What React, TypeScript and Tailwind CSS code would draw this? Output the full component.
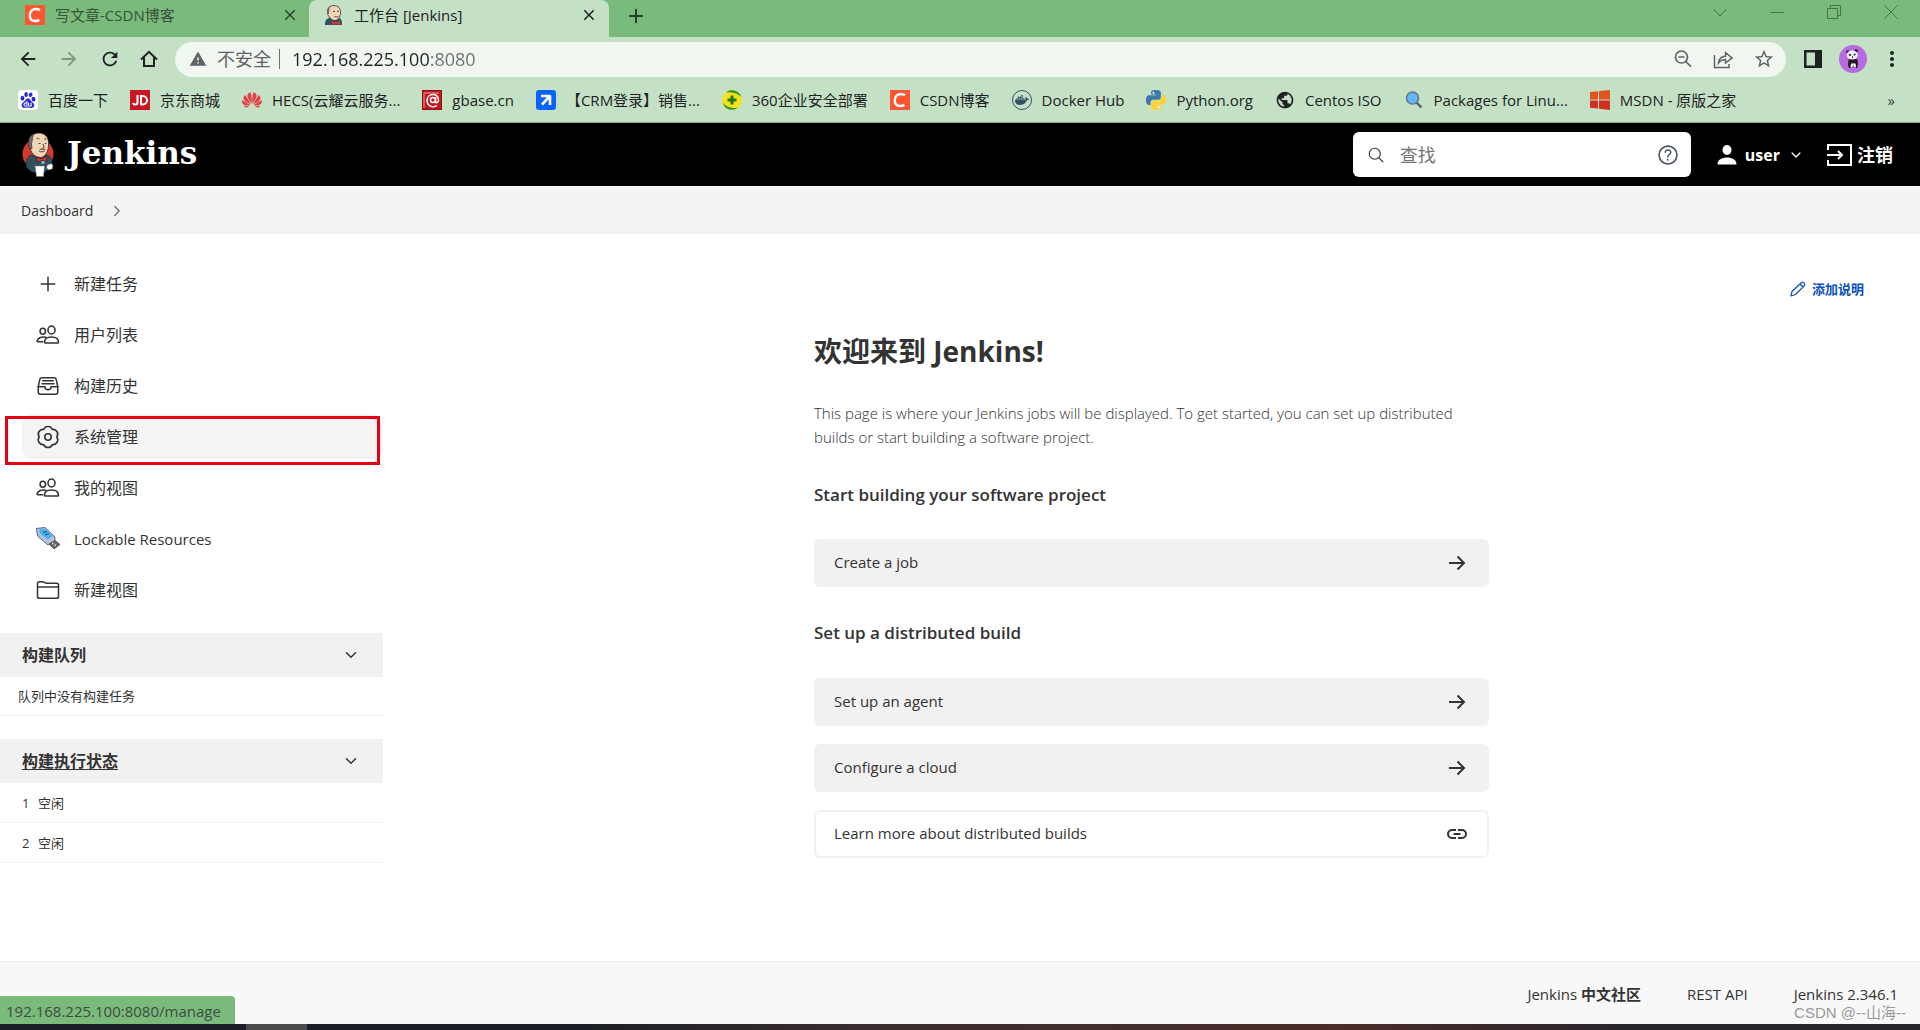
import type { ReactNode } from 'react'
import { SiBaidu, SiDocker, SiHuawei } from 'react-icons/si'
import {
  MdArrowBack,
  MdArrowForward,
  MdClose,
  MdMoreVert,
  MdPublic,
  MdRefresh,
  MdStarBorder,
  MdWarning,
} from 'react-icons/md'
import {
  IoAddOutline,
  IoChevronDown,
  IoChevronForward,
  IoFileTrayFullOutline,
  IoFolderOutline,
  IoHelpCircleOutline,
  IoSearchOutline,
} from 'react-icons/io5'

function CsdnIcon() {
  return (
    <svg className="h-5 w-5 shrink-0" viewBox="0 0 20 20">
      <rect width="20" height="20" fill="#fc5531" />
      <path d="M15 5.2C11.5 3 5.2 3.400 4.800 10.200c-.2 6.300 5.800 6.600 9.600 4.700" fill="none" stroke="#fff" strokeWidth="2.400" />
    </svg>
  )
}

function JenkinsHead() {
  return (
    <svg className="h-5 w-5 shrink-0" viewBox="0 0 20 20">
      <path d="M1 20c0-4 1-6 4-7l10 0c3 1 3 4 3 7z" fill="#335061" />
      <path d="M3.500 8C3 3 6 .6 10 .6s7 2.900 6.500 7.400c-.2 4-2.500 7.500-5.500 7.500S4 12 3.500 8z" fill="#f0d6b7" stroke="#3b2f2a" strokeWidth=".8" />
      <path d="M3.300 9C2.500 4 4.500 1.500 7 1c-2 2-1.500 4-2 8z" fill="#6d6b6d" />
      <path d="M9 6.500h2M13 6.300h2M10.500 11.500c1.500.8 3 .5 4-.2" stroke="#3b2f2a" strokeWidth=".9" fill="none" />
      <path d="M8 16l4 1.500L16 16v4l-4-1-4 1z" fill="#d33833" />
    </svg>
  )
}

function JenkinsLogo() {
  return (
    <svg className="h-[45px] w-8 shrink-0" viewBox="0 0 32 45">
      <circle cx="16" cy="22" r="15.500" fill="#d33833" />
      <path d="M5 36C3 31 5 25 9 23l7 3 9-3c5 2 6 8 4 13l-7 4H10z" fill="#335061" stroke="#1b2a33" strokeWidth=".8" />
      <path d="M7 13C6.500 5 11 1 17 1s10 4.500 9.600 11C26.500 20 23 25.500 18.500 25.500 13 25.500 8.500 21 7 13z" fill="#f0d6b7" stroke="#2b221e" strokeWidth=".8" />
      <path d="M6.800 14C5.500 7 8.500 3 12 1.800 9.500 6 11 9 9.500 11.500L10 17c-1.800 0-2.800-1-3.200-3z" fill="#6d6b6d" stroke="#2b221e" strokeWidth=".6" />
      <path d="M14.500 7c1-1 2.200-1 3 0M22 7.500c.8-.8 1.800-.8 2.500 0M16.500 11.500h2M22.800 11.500h1.600M21 12l1.200 3-1.700.6M17 19c2 1.400 4.400 1 6-.4" fill="none" stroke="#2b221e" strokeWidth=".8" />
      <path d="M17 17.300c2-1.200 5-1.200 7-.2-1.500 1.500-5 1.600-7 .2z" fill="#6d6b6d" />
      <path d="M15 25l4.500 2L24 24.500l1 5-5-1-5 1.500z" fill="#d33833" stroke="#3d0f0d" strokeWidth=".6" />
      <circle cx="21" cy="30.500" r="2.300" fill="#81b0c4" stroke="#1b2a33" strokeWidth=".7" />
      <path d="M13 34h9.500l-1 10.500h-7z" fill="#fff" stroke="#777" strokeWidth=".5" />
      <path d="M25 33l4-1.500 2 1.500-.5 4-4 1-2-2z" fill="#fff" stroke="#444" strokeWidth=".6" />
    </svg>
  )
}

function JdIcon() {
  return (
    <svg className="h-5 w-5 shrink-0" viewBox="0 0 20 20">
      <rect width="20" height="20" fill="#c81623" />
      <path d="M7.500 5v7.500c0 2.600-4 2.600-4.500.6M11 5v10M10.500 6h2c6 0 6 8.500 0 8.500h-2" fill="none" stroke="#fff" strokeWidth="2" />
    </svg>
  )
}

function GbaseIcon() {
  return (
    <svg className="h-5 w-5 shrink-0" viewBox="0 0 20 20">
      <rect x=".5" y=".5" width="19" height="19" fill="#c4161c" stroke="#8c1014" />
      <path d="M2 18V3h15" fill="none" stroke="#f0a0a0" strokeWidth="1" />
      <circle cx="11" cy="10" r="2.500" fill="none" stroke="#fff" strokeWidth="1.600" />
      <path d="M13.500 7v4.500c0 2 3 1.500 3-1.500 0-7.500-11-7-11.500 0-.3 6.500 6.500 8 10 5.500" fill="none" stroke="#fff" strokeWidth="1.500" />
    </svg>
  )
}

function CrmIcon() {
  return (
    <svg className="h-5 w-5 shrink-0" viewBox="0 0 20 20">
      <rect width="20" height="20" rx="3" fill="#0a63ff" />
      <path d="M5 6h9.500M14 5.500V15M13.500 6.500L6 14.500" fill="none" stroke="#fff" strokeWidth="2.600" />
    </svg>
  )
}

function Shield360Icon() {
  return (
    <svg className="h-5 w-5 shrink-0" viewBox="0 0 20 20">
      <circle cx="10" cy="10" r="9.800" fill="#f7e01d" />
      <path d="M4 2.200C9-1.500 17 0 19.500 7 15 2.500 9 2 4 2.200zM1 13c4 4.500 10 6 15 4.500-4 3.500-13 3.500-15-4.500z" fill="#2f9a1c" />
      <path d="M10 5.500v9M5.500 10h9" stroke="#1f7a12" strokeWidth="3" />
    </svg>
  )
}

function PythonIcon() {
  return (
    <svg className="h-5 w-5 shrink-0" viewBox="0 0 24 24">
      <path fill="#3c78aa" d="M14.250.18l.9.2.73.26.59.3.45.32.34.34.25.34.16.33.1.3.04.26.02.2-.01.13V8.500l-.05.63-.13.55-.21.46-.26.38-.3.31-.33.25-.35.19-.35.14-.33.1-.3.07-.26.04-.21.02H8.770l-.69.05-.59.14-.5.22-.41.27-.33.32-.27.35-.2.36-.15.37-.1.35-.07.32-.04.27-.02.21v3.060H3.170l-.21-.03-.28-.07-.32-.12-.35-.18-.36-.26-.36-.36-.35-.46-.32-.59-.28-.73-.21-.88-.14-1.050-.05-1.230.06-1.220.16-1.040.24-.87.32-.71.36-.57.4-.44.42-.33.42-.24.4-.16.36-.1.32-.05.24-.01h.16l.06.01h8.160v-.83H6.180l-.01-2.750-.02-.37.05-.34.11-.31.17-.28.25-.26.31-.23.38-.2.44-.18.51-.15.58-.12.64-.1.71-.06.77-.04.84-.02 1.270.05z" />
      <circle cx="8.800" cy="3.300" r="1.100" fill="#fff" />
      <path fill="#fdd23e" d="M21.040 6.110l.28.06.32.12.35.18.36.27.36.35.35.47.32.59.28.73.21.88.14 1.040.05 1.230-.06 1.230-.16 1.040-.24.86-.32.71-.36.57-.4.45-.42.33-.42.24-.4.16-.36.09-.32.05-.24.02-.16-.01h-8.220v.82h5.840l.01 2.760.02.36-.05.34-.11.31-.17.29-.25.25-.31.24-.38.2-.44.17-.51.15-.58.13-.64.09-.71.07-.77.04-.84.01-1.270-.04-1.070-.14-.9-.2-.73-.25-.59-.3-.45-.33-.34-.34-.25-.34-.16-.33-.1-.3-.04-.25-.02-.2.01-.13v-5.340l.05-.64.13-.54.21-.46.26-.38.3-.32.33-.24.35-.2.35-.14.33-.1.3-.06.26-.04.21-.02.13-.01h5.840l.69-.05.59-.14.5-.21.41-.28.33-.32.27-.35.2-.36.15-.36.1-.35.07-.32.04-.28.02-.21V6.070h2.090l.14.01z" />
      <circle cx="15.200" cy="20.900" r="1.100" fill="#fff" />
    </svg>
  )
}

function LensIcon() {
  return (
    <svg className="h-5 w-5 shrink-0" viewBox="0 0 20 20">
      <path d="M12.500 12.500l5 5" stroke="#50606c" strokeWidth="2.400" />
      <circle cx="8.500" cy="8" r="6" fill="#64b5f6" stroke="#5a7a90" strokeWidth="1.600" />
    </svg>
  )
}

function WindowsIcon() {
  return (
    <svg className="h-5 w-5 shrink-0" viewBox="0 0 20 20">
      <path d="M0 2l8-.8V9.500H0zM9 1.100L20 0v9.500H9z" fill="#e2541f" />
      <path d="M0 10.500h8v8L0 17.700zM9 10.500h11V20L9 18.700z" fill="#cf3022" />
    </svg>
  )
}

function PandaAvatar() {
  return (
    <svg className="h-7 w-7" viewBox="0 0 28 28">
      <circle cx="14" cy="14" r="14" fill="#b66be0" />
      <path d="M9.500 14.500c2-1.500 7-1.500 9 0l.5 5-1 3.500h-3l-1-3-1 3h-3l-1-3z" fill="#1d1a22" />
      <path d="M12 18.500h4.500l.5 4h-1.500l-1.300-2.500-1.200 2.500h-1.500z" fill="#fff" />
      <circle cx="9" cy="7" r="1.800" fill="#1d1a22" />
      <circle cx="17" cy="6" r="1.800" fill="#1d1a22" />
      <ellipse cx="13.300" cy="10" rx="5.600" ry="4.600" fill="#f4f0f6" />
      <path d="M10 9.500l2 1M16.500 9l-1.800 1.200M13 12h1" stroke="#1d1a22" strokeWidth="1.400" />
    </svg>
  )
}

function PeopleIcon() {
  return (
    <svg className="h-6 w-6" viewBox="0 0 24 24" fill="none" stroke="currentColor" strokeWidth="1.600" strokeLinejoin="round">
      <ellipse cx="15.500" cy="7" rx="3.500" ry="4" />
      <ellipse cx="6.800" cy="8.300" rx="2.700" ry="3" />
      <path d="M8.500 19.200c0-3.400 3-5.200 7-5.200s7 1.800 7 5.200c0 .5-.3.800-.8.800H9.300c-.5 0-.8-.3-.8-.8z" />
      <path d="M9.800 14.300c-3.800-1-8 .3-8.600 3.600-.1.500.2.800.7.800h4.800" strokeLinecap="round" />
    </svg>
  )
}

function GearIcon() {
  return (
    <svg className="h-6 w-6" viewBox="0 0 24 24" fill="none" stroke="currentColor" strokeWidth="1.600" strokeLinejoin="round">
      <path d="M7.600 4.400a4.800 4.800 0 0 1 8.800 0a4.800 4.800 0 0 1 4.400 7.600a4.800 4.800 0 0 1-4.400 7.600a4.800 4.800 0 0 1-8.800 0a4.800 4.800 0 0 1-4.400-7.600a4.800 4.800 0 0 1 4.400-7.600z" />
      <circle cx="12" cy="12" r="3.200" />
    </svg>
  )
}

function UsbIcon() {
  return (
    <svg className="h-6 w-6" viewBox="0 0 24 24">
      <path d="M0 1.500L9 .5l10 9.500-.5 5-6.500 3L2 9.500z" fill="#b9bfd6" stroke="#5d6390" strokeWidth="1" />
      <path d="M3.500 2.500L9 1.800l7.500 7.400-5 3.300L3.500 6z" fill="#45b4ee" />
      <path d="M7 5.500l4-1M9 8l4-1.500" stroke="#0b58a8" strokeWidth="1.200" />
      <path d="M13 17l6-3.500 5 4-6 4.500z" fill="#666" stroke="#444" strokeWidth=".8" />
      <path d="M16 16.500h1.500M18.500 18H20" stroke="#ddd" strokeWidth="1.300" />
    </svg>
  )
}

function ArrowIcon() {
  return (
    <svg className="h-5 w-5" viewBox="0 0 20 20" fill="none" stroke="currentColor" strokeWidth="2">
      <path d="M2 11h15M10.500 4.500l6.500 6.500-6.500 6.500" />
    </svg>
  )
}

function LinkIcon() {
  return (
    <svg className="h-5 w-5" viewBox="0 0 20 20" fill="none" stroke="currentColor" strokeWidth="2">
      <path d="M9 7H5a4 4 0 0 0 0 8h4M11 7h4a4 4 0 0 1 0 8h-4M6.500 11h7" />
    </svg>
  )
}

const bookmarks = [
  {
    label: '百度一下',
    icon: (
      <span className="grid h-5 w-5 shrink-0 place-items-center rounded-sm bg-white">
        <SiBaidu className="h-4 w-4 text-[#2529d8]" />
      </span>
    ),
  },
  { label: '京东商城', icon: <JdIcon /> },
  { label: 'HECS(云耀云服务...', icon: <SiHuawei className="h-5 w-5 shrink-0 text-[#e5404a]" /> },
  { label: 'gbase.cn', icon: <GbaseIcon /> },
  { label: '【CRM登录】销售...', icon: <CrmIcon /> },
  { label: '360企业安全部署', icon: <Shield360Icon /> },
  { label: 'CSDN博客', icon: <CsdnIcon /> },
  {
    label: 'Docker Hub',
    icon: (
      <span className="grid h-5 w-5 shrink-0 place-items-center rounded-full border border-[#33526a]">
        <SiDocker className="h-[14px] w-[14px] text-[#33526a]" />
      </span>
    ),
  },
  { label: 'Python.org', icon: <PythonIcon /> },
  { label: 'Centos ISO', icon: <MdPublic className="h-5 w-5 shrink-0 text-[#202124]" /> },
  { label: 'Packages for Linu...', icon: <LensIcon /> },
  { label: 'MSDN - 原版之家', icon: <WindowsIcon /> },
]

const tasks = [
  { label: '新建任务', icon: <IoAddOutline className="h-6 w-6" /> },
  { label: '用户列表', icon: <PeopleIcon /> },
  { label: '构建历史', icon: <IoFileTrayFullOutline className="h-6 w-6" /> },
  { label: '系统管理', icon: <GearIcon />, active: true },
  { label: '我的视图', icon: <PeopleIcon /> },
  { label: 'Lockable Resources', icon: <UsbIcon />, latin: true },
  { label: '新建视图', icon: <IoFolderOutline className="h-6 w-6" /> },
]

function TabStrip() {
  return (
    <div className="flex h-[37px] bg-[#7abb7c]">
      <div className="flex w-[309px] items-center gap-[10px] pr-[10px] pb-2 pl-[25px]">
        <CsdnIcon />
        <button className="flex-1 text-left text-[15px] leading-5 text-[#35523a]">写文章-CSDN博客</button>
        <button aria-label="Close tab">
          <MdClose className="h-[18px] w-[18px] text-[#2d4531]" />
        </button>
      </div>
      <div className="flex w-[300px] items-center gap-[10px] rounded-t-lg bg-[#c5e1c5] pr-[11px] pb-2 pl-[15px]">
        <JenkinsHead />
        <button className="flex-1 text-left text-[15px] leading-5 text-[#202124]">工作台 [Jenkins]</button>
        <button aria-label="Close tab">
          <MdClose className="h-[18px] w-[18px] text-[#202124]" />
        </button>
      </div>
      <button aria-label="New tab" className="ml-[18px] mb-[6px]">
        <svg className="h-[18px] w-[18px]" viewBox="0 0 18 18" stroke="#26402a" strokeWidth="2">
          <path d="M9 2v14M2 9h14" />
        </svg>
      </button>
      <div className="ml-auto flex items-start gap-[43px] pr-[22px] pt-[5px] text-[#47724b]">
        <button aria-label="Search tabs">
          <svg className="h-[14px] w-[14px]" viewBox="0 0 14 14" fill="none" stroke="currentColor">
            <path d="M.5 4L7 11l6.500-7" />
          </svg>
        </button>
        <button aria-label="Minimize">
          <svg className="h-[14px] w-[14px]" viewBox="0 0 14 14" stroke="currentColor">
            <path d="M0 7.500h14" />
          </svg>
        </button>
        <button aria-label="Restore">
          <svg className="h-[14px] w-[14px]" viewBox="0 0 14 14" fill="none" stroke="currentColor">
            <path d="M.5 3.500h10v10H.5zM3.500 3V.5h10v10H11" />
          </svg>
        </button>
        <button aria-label="Close">
          <svg className="h-[14px] w-[14px]" viewBox="0 0 14 14" stroke="currentColor">
            <path d="M.5.5l13 13M13.500.5l-13 13" />
          </svg>
        </button>
      </div>
    </div>
  )
}

function Toolbar() {
  return (
    <div className="flex h-[45px] items-center bg-[#c5e1c5] pr-4 pb-px pl-[17px] text-[#202124]">
      <div className="flex w-[158px] items-center gap-[19px]">
        <button aria-label="Back">
          <MdArrowBack className="h-[22px] w-[22px]" />
        </button>
        <button aria-label="Forward">
          <MdArrowForward className="h-[22px] w-[22px] text-[#7f9780]" />
        </button>
        <button aria-label="Reload">
          <MdRefresh className="h-[22px] w-[22px]" />
        </button>
        <button aria-label="Home">
          <svg className="h-[18px] w-[18px]" viewBox="0 0 18 18" fill="none" stroke="currentColor" strokeWidth="2">
            <path d="M1 9.500L9 1.800l8 7.700M4 7.500V16h10V7.500" />
          </svg>
        </button>
      </div>
      <div className="flex h-[35px] flex-1 items-center rounded-full bg-[#f0f7f0] pr-[11px] pl-[14px] text-[#5f6368]">
        <MdWarning className="h-[18px] w-[18px]" />
        <span className="ml-[10px] text-[18px] leading-6">不安全</span>
        <span className="mr-3 ml-2 h-5 w-px bg-[#6b7075]" />
        <input
          aria-label="Address"
          defaultValue="192.168.225.100:8080"
          className="flex-1 bg-linear-[to_right,#202124_138px,#6b6f72_138px] bg-clip-text text-[18px] leading-6 text-transparent outline-none"
        />
        <div className="flex items-center gap-5">
          <button aria-label="Zoom">
            <svg className="h-5 w-5" viewBox="0 0 20 20" fill="none" stroke="currentColor" strokeWidth="1.700">
              <circle cx="8.500" cy="8" r="6" />
              <path d="M12.800 12.500l5.200 5.200M5.500 8h6" />
            </svg>
          </button>
          <button aria-label="Share">
            <svg className="h-5 w-5" viewBox="0 0 20 20" fill="none" stroke="currentColor" strokeWidth="1.500">
              <path d="M1.500 6v12.500H16V15M5.500 14c.5-4.500 3-6.500 7-6.700V3.500L19 9l-6.500 5v-3.500c-3 0-5 1-7 3.500z" />
            </svg>
          </button>
          <button aria-label="Bookmark">
            <MdStarBorder className="h-[22px] w-[22px]" />
          </button>
        </div>
      </div>
      <div className="ml-[18px] flex items-center gap-[17px]">
        <button aria-label="Side panel">
          <svg className="h-[18px] w-[18px]" viewBox="0 0 18 18">
            <path fillRule="evenodd" d="M0 0h18v18H0zM2.500 2.500v13H11v-13z" fill="currentColor" />
          </svg>
        </button>
        <button aria-label="Profile">
          <PandaAvatar />
        </button>
        <button aria-label="Menu" className="-ml-1">
          <MdMoreVert className="h-6 w-6" />
        </button>
      </div>
    </div>
  )
}

function BookmarkBar() {
  return (
    <nav className="flex h-[41px] items-center gap-[22px] border-b border-[#8fae90] bg-[#c5e1c5] pr-[25px] pb-1 pl-[18px]">
      {bookmarks.map((b) => (
        <a key={b.label} href="#" className="flex items-center gap-[10px] text-[15px] leading-5 whitespace-nowrap text-[#202124]">
          {b.icon}
          {b.label}
        </a>
      ))}
      <button aria-label="More bookmarks" className="ml-auto text-[15px] leading-5 text-[#3c4043]">
        »
      </button>
    </nav>
  )
}

function Header() {
  return (
    <header className="flex h-[63px] items-center bg-black pr-[27px] pl-[22px] text-white">
      <a href="#" className="flex items-center gap-[13px]">
        <JenkinsLogo />
        <span className="pb-1 font-['DejaVu_Serif',serif] text-[31px] leading-10 font-bold">Jenkins</span>
      </a>
      <div className="ml-auto flex h-[45px] w-[338px] items-center rounded-md bg-white pr-[10px] pl-[14px]">
        <IoSearchOutline className="h-[18px] w-[18px] text-[#333]" />
        <input
          aria-label="查找"
          placeholder="查找"
          className="ml-[15px] min-w-0 flex-1 text-[18px] leading-6 text-[#333] outline-none placeholder:text-[#757575]"
        />
        <a href="#" aria-label="Help">
          <IoHelpCircleOutline className="h-[26px] w-[26px] text-[#4a5560]" />
        </a>
      </div>
      <a href="#" className="ml-[26px] flex items-center gap-2 text-[16px] leading-5 font-bold">
        <svg className="h-5 w-5" viewBox="0 0 20 20" fill="currentColor">
          <ellipse cx="10" cy="5" rx="4.500" ry="5" />
          <path d="M.5 19.500c0-5 4.500-7 9.500-7s9.500 2 9.500 7z" />
        </svg>
        user
      </a>
      <button aria-label="User menu" className="ml-[9px]">
        <IoChevronDown className="h-[14px] w-[14px]" />
      </button>
      <a href="#" className="ml-6 flex items-center gap-[5px] text-[18px] leading-6 font-bold">
        <svg className="h-[22px] w-[25px]" viewBox="0 0 25 22" fill="none" stroke="currentColor" strokeWidth="2">
          <path d="M1 6V1h23v20H1v-5M0 11h14M11 7l4 4-4 4" />
        </svg>
        注销
      </a>
    </header>
  )
}

function SidePane({ title, underline, children }: { title: string; underline?: boolean; children: ReactNode }) {
  return (
    <section>
      <div className="flex h-11 items-center justify-between bg-[#f1f1f1] pr-6 pl-[22px]">
        <h2 className="text-[16px] leading-6 font-bold">
          {underline ? (
            <a href="#" className="underline underline-offset-2">
              {title}
            </a>
          ) : (
            title
          )}
        </h2>
        <button aria-label="Collapse">
          <IoChevronDown className="h-4 w-4" />
        </button>
      </div>
      {children}
    </section>
  )
}

function Sidebar() {
  return (
    <aside className="w-[383px] shrink-0 pt-[27px]">
      <nav className="flex flex-col gap-[6px] pl-[22px]">
        {tasks.map((t) => (
          <a
            key={t.label}
            href="#"
            className={
              t.active
                ? 'relative flex h-[45px] items-center gap-[14px] rounded-[10px] bg-[#f4f4f4] pl-[14px] text-[16px] leading-6'
                : t.latin
                  ? 'flex h-[45px] items-center gap-[14px] rounded-[10px] pl-[14px] text-[15px] leading-6 font-medium'
                  : 'flex h-[45px] items-center gap-[14px] rounded-[10px] pl-[14px] text-[16px] leading-6'
            }
          >
            {t.icon}
            {t.label}
            {/* Highlight frame */}
            {t.active && <span className="absolute top-0.5 right-[3px] -bottom-[6px] -left-[17px] border-3 border-[#e60012]" />}
          </a>
        ))}
      </nav>
      <div className="mt-[21px] flex flex-col gap-[23px]">
        <SidePane title="构建队列">
          <p className="border-b border-[#f0f0f0] py-2 pl-[18px] text-[13px] leading-[22px]">队列中没有构建任务</p>
        </SidePane>
        <SidePane title="构建执行状态" underline>
          <table className="w-full text-left text-[13px] leading-6">
            <tbody>
              {[1, 2].map((n) => (
                <tr key={n} className="border-b border-[#f0f0f0]">
                  <td className="w-[38px] pt-2 pb-[7px] pl-[22px]">{n}</td>
                  <td className="pt-2 pb-[7px]">空闲</td>
                </tr>
              ))}
            </tbody>
          </table>
        </SidePane>
      </div>
    </aside>
  )
}

function BlockLink({ label, external }: { label: string; external?: boolean }) {
  return (
    <a
      href="#"
      className={
        external
          ? 'flex h-12 items-center justify-between rounded-md border-2 border-[#f1f1f1] pr-5 pb-0.5 pl-[18px] text-[15px] leading-6 font-medium'
          : 'flex h-12 items-center justify-between rounded-md bg-[#f1f1f1] pr-[22px] pb-0.5 pl-5 text-[15px] leading-6 font-medium'
      }
    >
      {label}
      {external ? <LinkIcon /> : <ArrowIcon />}
    </a>
  )
}

function Main() {
  return (
    <main className="min-w-0 flex-1 pt-11">
      <div className="flex justify-end pr-14">
        <a href="#" className="flex items-center gap-[6px] text-[13px] leading-[22px] font-bold text-[#0b50bd]">
          <svg className="h-4 w-4" viewBox="0 0 16 16" fill="none" stroke="currentColor" strokeWidth="1.200" strokeLinejoin="round">
            <path d="M1 15l1-4.500L11.500 1.500c1.500-1 4 1 3 3L5.500 13.500zM10 3l3 3" />
          </svg>
          添加说明
        </a>
      </div>
      <div className="mx-auto mt-8 w-[675px]">
        <h1 className="text-[28px] leading-[38px] font-bold">欢迎来到 Jenkins!</h1>
        <p className="mt-[31px] text-[15px] leading-6 font-light">
          This page is where your Jenkins jobs will be displayed. To get started, you can set up distributed builds or
          start building a software project.
        </p>
        <h2 className="mt-[33px] text-[17px] leading-[25px] font-semibold">Start building your software project</h2>
        <div className="mt-8">
          <BlockLink label="Create a job" />
        </div>
        <h2 className="mt-[33px] text-[17px] leading-[25px] font-semibold">Set up a distributed build</h2>
        <div className="mt-[33px] flex flex-col gap-[18px]">
          <BlockLink label="Set up an agent" />
          <BlockLink label="Configure a cloud" />
          <BlockLink label="Learn more about distributed builds" external />
        </div>
      </div>
    </main>
  )
}

export default function App() {
  return (
    <div className="flex min-h-screen flex-col bg-white font-['Open_Sans','Noto_Sans_CJK_SC',sans-serif] text-[#333]">
      <TabStrip />
      <Toolbar />
      <BookmarkBar />
      <Header />
      <nav className="flex h-12 items-center gap-4 bg-[#f3f3f3] pt-0.5 pl-[21px] text-[14px] leading-5 font-medium">
        <a href="#">Dashboard</a>
        <IoChevronForward className="h-4 w-4 text-[#777]" />
      </nav>
      <div className="flex flex-1">
        <Sidebar />
        <Main />
      </div>
      <footer className="relative flex h-[63px] items-center justify-end gap-[46px] border-t border-[#eee] bg-[#f8f8f8] pt-0.5 pr-[22px] text-[15px] leading-5 font-medium">
        <a href="#">
          Jenkins <span className="font-bold">中文社区</span>
        </a>
        <a href="#">REST API</a>
        <a href="#">Jenkins 2.346.1</a>
        {/* Link preview bubble */}
        <span className="absolute bottom-0 left-0 rounded-tr bg-[#7abb7c] pt-1 pr-[14px] pb-0.5 pl-[6px] text-[15px] leading-[22px] font-normal text-[#3f4a41]">
          192.168.225.100:8080/manage
        </span>
        <span className="absolute right-[14px] bottom-px font-['Liberation_Sans','Noto_Sans_CJK_SC',sans-serif] text-[15px] leading-5 font-normal text-[#999]">
          CSDN @--山海--
        </span>
      </footer>
      <div className="flex h-[6px] bg-linear-[to_right,#1b1f25_30%,#3a2d2f_45%,#4a2c28_70%,#28252d_85%]">
        <span className="ml-[246px] w-[61px] bg-[#4b4b4d]" />
      </div>
    </div>
  )
}
